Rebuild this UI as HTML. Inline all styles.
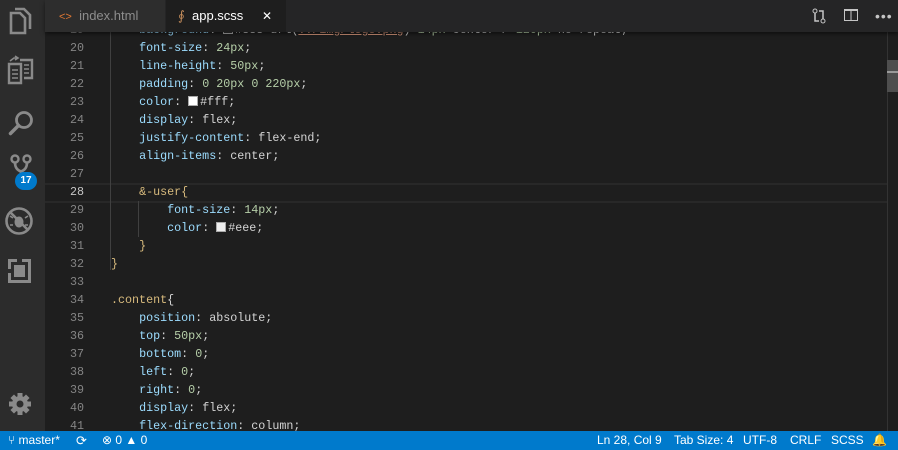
<!DOCTYPE html>
<html><head><meta charset="utf-8"><style>
*{margin:0;padding:0;box-sizing:border-box}
body{width:898px;height:450px;background:#1e1e1e;overflow:hidden;position:relative;font-family:"Liberation Sans",sans-serif}
#act{position:absolute;left:0;top:0;width:45px;height:431px;background:#2c2c2c}
#act svg{position:absolute;left:0;width:45px;height:40px}
#tabs{position:absolute;left:45px;top:0;right:0;height:32px;background:#252526;box-shadow:0 2px 4px rgba(0,0,0,.5);z-index:2}
.tab{position:absolute;top:0;height:32px;line-height:32px;font-size:13px;color:#8d8d8d}
#ed{position:absolute;left:45px;top:0;right:0;height:431px;font-family:"Liberation Mono",monospace;font-size:11.7px;overflow:hidden}
.ln{position:absolute;left:0;width:39px;text-align:right;color:#858585;height:18px;line-height:18px}
.cd{position:absolute;left:66px;white-space:pre;height:18px;line-height:18px;color:#d4d4d4}
.p{color:#9cdcfe}.n{color:#b5cea8}.s{color:#d7ba7d}.o{color:#ce9178}
.sw{display:inline-block;width:10px;height:10px;border:1px solid #aaa;vertical-align:-1px;margin-right:2px}
#status{position:absolute;left:0;right:0;top:431px;height:19px;background:#007acc;color:#fff;font-size:12px;line-height:19px}
#status span{position:absolute;top:0}
</style></head><body>
<div id="act">
<svg style="top:0px" viewBox="0 0 45 40"><path d="M11 13h9l5 5v15h-14z M15 9h9l6 6v14" fill="none" stroke="#8a8a8a" stroke-width="2.6"/></svg>
<svg style="top:52px" viewBox="0 0 45 40"><path d="M9 12h12v19h-12z M20 8h12v18h-8" fill="none" stroke="#8a8a8a" stroke-width="2.4"/><path d="M12 18h6M12 22h6M12 26h6M24 13h5M24 17h5M24 21h5" stroke="#8a8a8a" stroke-width="1.6"/><path d="M10 9l4-3h4M15 4l3 2-3 2" fill="none" stroke="#8a8a8a" stroke-width="1.6"/></svg>
<svg style="top:102px" viewBox="0 0 45 40"><circle cx="24" cy="18" r="7.5" fill="none" stroke="#8a8a8a" stroke-width="2.8"/><path d="M18.5 23.5l-8 8" stroke="#8a8a8a" stroke-width="3.5" stroke-linecap="round"/></svg>
<svg style="top:148px" viewBox="0 0 45 40"><circle cx="15" cy="11" r="3.5" fill="none" stroke="#8a8a8a" stroke-width="2.4"/><circle cx="27" cy="11" r="3.5" fill="none" stroke="#8a8a8a" stroke-width="2.4"/><path d="M15 14.5q0 7 6 9q6-2 6-9M21 23v10" fill="none" stroke="#8a8a8a" stroke-width="2.6"/></svg>
<div style="position:absolute;left:15px;top:172px;width:22px;height:18px;border-radius:9px;background:#007acc;color:#fff;font-size:10px;font-weight:bold;text-align:center;line-height:18px">17</div>
<svg style="top:201px" viewBox="0 0 45 40"><circle cx="19" cy="20" r="12.5" fill="none" stroke="#8a8a8a" stroke-width="2.6"/><path d="M10 11l18 18" stroke="#8a8a8a" stroke-width="2.6"/><ellipse cx="19" cy="21" rx="4.5" ry="5.5" fill="#8a8a8a"/><path d="M13 17l-3-2M25 17l3-2M13 24h-3M25 24h3" stroke="#8a8a8a" stroke-width="1.6"/></svg>
<svg style="top:251px" viewBox="0 0 45 40"><path d="M9.5 9.5h20v21h-20z" fill="none" stroke="#8a8a8a" stroke-width="3"/><rect x="14" y="14" width="11" height="12" fill="#8a8a8a"/><rect x="17" y="7" width="5" height="5" fill="#2c2c2c"/><rect x="7" y="18" width="5" height="4" fill="#2c2c2c"/></svg>
<svg style="top:384px" viewBox="0 0 45 40"><g fill="#8a8a8a" transform="translate(20 20)"><rect x="-2.5" y="-11" width="5" height="22"/><rect x="-2.5" y="-11" width="5" height="22" transform="rotate(45)"/><rect x="-2.5" y="-11" width="5" height="22" transform="rotate(90)"/><rect x="-2.5" y="-11" width="5" height="22" transform="rotate(135)"/><circle r="8"/></g><circle cx="20" cy="20" r="3.5" fill="#2c2c2c"/></svg>
</div>
<div id="tabs">
<div class="tab" style="left:0;width:120px;background:#2d2d2d;padding-left:14px"><span style="color:#e37933;font-size:11px">&lt;&gt;</span>&nbsp; index.html</div>
<div class="tab" style="left:121px;width:120px;background:#1e1e1e;padding-left:12px;color:#fff"><span style="color:#c08a5a">∮</span>&nbsp; app.scss<span style="position:absolute;left:96px;font-size:12px">✕</span></div>
<svg style="position:absolute;left:767px;top:8px" width="14" height="16" viewBox="0 0 14 16"><circle cx="3" cy="3" r="2" fill="none" stroke="#c5c5c5"/><circle cx="11" cy="13" r="2" fill="none" stroke="#c5c5c5"/><path d="M3 5v8h4M11 11v-8h-4" fill="none" stroke="#c5c5c5" stroke-width="1.5"/></svg>
<svg style="position:absolute;left:799px;top:9px" width="14" height="13"><rect x="0.5" y="0.5" width="13" height="11" fill="none" stroke="#c5c5c5"/><rect x="0" y="0" width="14" height="2" fill="#c5c5c5"/><path d="M7 0v12" stroke="#c5c5c5"/></svg>
<div style="position:absolute;left:830px;top:8px;color:#c5c5c5;font-size:14px;letter-spacing:1px">•••</div>
</div>
<div id="ed">
<div style="position:absolute;left:0;right:11px;top:183px;height:20px;border-top:2px solid #282828;border-bottom:2px solid #282828"></div>
<div style="position:absolute;left:65px;top:20px;width:1px;height:250px;background:#404040"></div>
<div style="position:absolute;left:93px;top:201px;width:1px;height:36px;background:#404040"></div>
<div style="position:absolute;right:0;top:32px;width:11px;height:399px;border-left:1px solid #333"></div>
<div style="position:absolute;right:0;top:60px;width:11px;height:32px;background:#4e4e4e"></div>
<div style="position:absolute;right:0;top:71px;width:11px;height:2px;background:#999"></div>
<div id="lines"></div>
</div>
<div id="status">
<span style="left:8px">⑂ master*</span>
<span style="left:76px;font-size:13px">⟳</span>
<span style="left:102px">⊗ 0 ▲ 0</span>
<span style="left:597px">Ln 28, Col 9</span>
<span style="left:674px">Tab Size: 4</span>
<span style="left:743px">UTF-8</span>
<span style="left:790px">CRLF</span>
<span style="left:831px">SCSS</span>
<span style="left:872px">🔔</span>
</div>
<script>
var L=[
[19,'    <span class=p>background</span>: <span class=sw style="background:#333"></span>#333 url(<span class=o style="text-decoration:underline">../img/logo.png</span>) <span class=n>14px</span> center / <span class=n>120px</span> no-repeat;'],
[20,'    <span class=p>font-size</span>: <span class=n>24px</span>;'],
[21,'    <span class=p>line-height</span>: <span class=n>50px</span>;'],
[22,'    <span class=p>padding</span>: <span class=n>0</span> <span class=n>20px</span> <span class=n>0</span> <span class=n>220px</span>;'],
[23,'    <span class=p>color</span>: <span class=sw style="background:#fff"></span>#fff;'],
[24,'    <span class=p>display</span>: flex;'],
[25,'    <span class=p>justify-content</span>: flex-end;'],
[26,'    <span class=p>align-items</span>: center;'],
[27,''],
[28,'    <span class=s>&amp;-user</span><span class=s>{</span>'],
[29,'        <span class=p>font-size</span>: <span class=n>14px</span>;'],
[30,'        <span class=p>color</span>: <span class=sw style="background:#eee"></span>#eee;'],
[31,'    <span class=s>}</span>'],
[32,'<span class=s>}</span>'],
[33,''],
[34,'<span class=s>.content</span>{'],
[35,'    <span class=p>position</span>: absolute;'],
[36,'    <span class=p>top</span>: <span class=n>50px</span>;'],
[37,'    <span class=p>bottom</span>: <span class=n>0</span>;'],
[38,'    <span class=p>left</span>: <span class=n>0</span>;'],
[39,'    <span class=p>right</span>: <span class=n>0</span>;'],
[40,'    <span class=p>display</span>: flex;'],
[41,'    <span class=p>flex-direction</span>: column;']];
var h='';L.forEach(function(l){var t=21+(l[0]-19)*18;h+='<div class=ln style="top:'+t+'px'+(l[0]==28?';color:#c6c6c6':'')+'">'+l[0]+'</div><div class=cd style="top:'+t+'px">'+l[1]+'</div>';});
document.getElementById('lines').innerHTML=h;
</script>
</body></html>
